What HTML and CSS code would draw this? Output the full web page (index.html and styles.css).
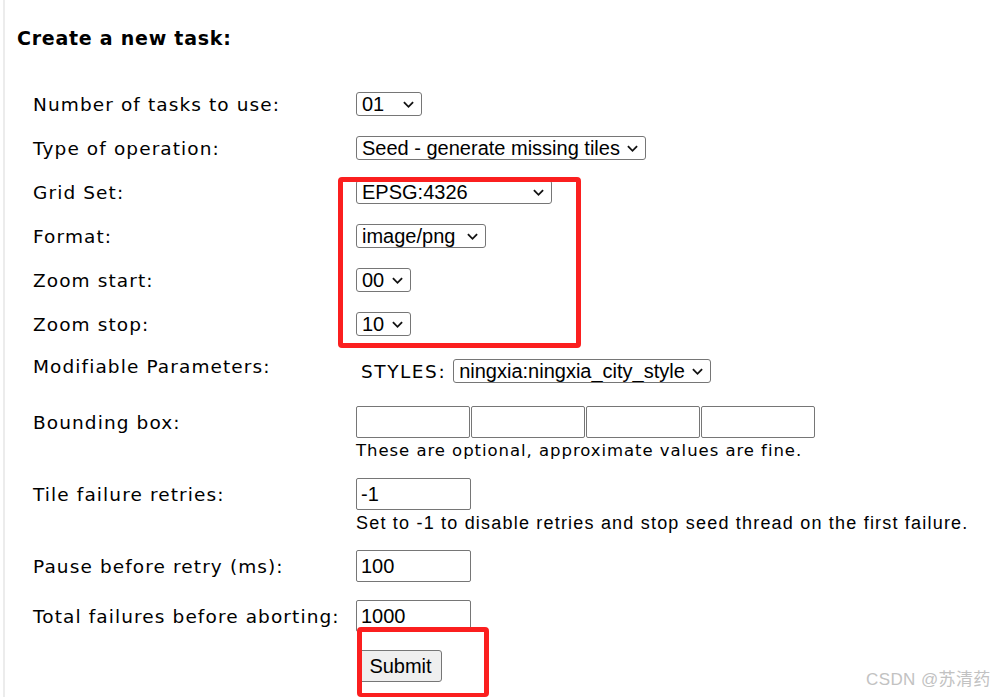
FILE: index.html
```html
<!DOCTYPE html>
<html>
<head>
<meta charset="utf-8">
<link rel="stylesheet" href="styles.css">
</head>
<body>
<div class="page">
  <div class="title">Create a new task:</div>
  <form class="form">
    <div class="row">
      <label class="label">Number of tasks to use:</label>
      <span class="sel"><select class="s-tasks"><option>01</option></select><svg class="chev" viewBox="0 0 12 7"><path d="M1 1L6 6L11 1"/></svg></span>
    </div>
    <div class="row">
      <label class="label">Type of operation:</label>
      <span class="sel"><select class="s-type"><option>Seed - generate missing tiles</option></select><svg class="chev" viewBox="0 0 12 7"><path d="M1 1L6 6L11 1"/></svg></span>
    </div>
    <div class="row">
      <label class="label">Grid Set:</label>
      <span class="sel"><select class="s-grid"><option>EPSG:4326</option></select><svg class="chev" viewBox="0 0 12 7"><path d="M1 1L6 6L11 1"/></svg></span>
    </div>
    <div class="row">
      <label class="label">Format:</label>
      <span class="sel"><select class="s-format"><option>image/png</option></select><svg class="chev" viewBox="0 0 12 7"><path d="M1 1L6 6L11 1"/></svg></span>
    </div>
    <div class="row">
      <label class="label">Zoom start:</label>
      <span class="sel"><select class="s-zoom"><option>00</option></select><svg class="chev" viewBox="0 0 12 7"><path d="M1 1L6 6L11 1"/></svg></span>
    </div>
    <div class="row">
      <label class="label">Zoom stop:</label>
      <span class="sel"><select class="s-zoom"><option>10</option></select><svg class="chev" viewBox="0 0 12 7"><path d="M1 1L6 6L11 1"/></svg></span>
    </div>
    <div class="row row-params">
      <label class="label">Modifiable Parameters:</label>
      <div class="params">
        <span class="param-name">STYLES:</span>
        <span class="sel"><select class="s-style"><option>ningxia:ningxia_city_style</option></select><svg class="chev" viewBox="0 0 12 7"><path d="M1 1L6 6L11 1"/></svg></span>
      </div>
    </div>
    <div class="row row-bbox">
      <label class="label">Bounding box:</label>
      <div class="value">
        <div class="bbox">
          <input class="box-in" type="text"><input class="box-in" type="text"><input class="box-in" type="text"><input class="box-in" type="text">
        </div>
        <div class="note-v">These are optional, approximate values are fine.</div>
      </div>
    </div>
    <div class="row row-retry">
      <label class="label">Tile failure retries:</label>
      <div class="value">
        <input class="txt" type="text" value="-1">
        <div class="note-a">Set to -1 to disable retries and stop seed thread on the first failure.</div>
      </div>
    </div>
    <div class="row row-pause">
      <label class="label">Pause before retry (ms):</label>
      <input class="txt" type="text" value="100">
    </div>
    <div class="row row-total">
      <label class="label">Total failures before aborting:</label>
      <input class="txt" type="text" value="1000">
    </div>
    <div class="row row-submit">
      <span class="label"></span>
      <button class="btn" type="button">Submit</button>
    </div>
  </form>
  <div class="mark mark-grid"></div>
  <div class="mark mark-submit"></div>
  <div class="watermark">CSDN @苏清药</div>
</div>
</body>
</html>
```
FILE: styles.css
```css
html, body {
  margin: 0;
  padding: 0;
  background: #fff;
}
body {
  font-family: "DejaVu Sans", Verdana, sans-serif;
  color: #000;
  overflow: hidden;
}
.page {
  position: relative;
  margin-left: 3px;
  border-left: 2px solid #ececec;
  height: 697px;
  box-sizing: border-box;
  padding: 28px 0 0 12px;
}
.title {
  font-weight: bold;
  font-size: 19px;
  line-height: 21px;
  letter-spacing: 0.75px;
}
.form {
  margin: 43px 0 0 16px;
}
.row {
  display: flex;
  align-items: baseline;
  margin-bottom: 20px;
}
.label {
  flex: none;
  width: 323px;
  font-size: 18.5px;
  line-height: 21px;
  letter-spacing: 1.1px;
  white-space: nowrap;
}
.sel {
  position: relative;
  display: inline-block;
}
select {
  -webkit-appearance: none;
  appearance: none;
  display: block;
  box-sizing: border-box;
  height: 24px;
  margin: 0;
  padding: 0 0 0 5px;
  border: 1px solid #767676;
  border-radius: 3px;
  background: #fff;
  color: #000;
  font-family: "Liberation Sans", Arial, sans-serif;
  font-size: 20px;
  line-height: 22px;
}
.chev {
  position: absolute;
  right: 8px;
  top: 9px;
  width: 11px;
  height: 7px;
  overflow: visible;
}
.chev path {
  fill: none;
  stroke: #111;
  stroke-width: 2;
}
.s-tasks { width: 66px; }
.s-type { width: 290px; }
.s-grid { width: 196px; }
.s-format { width: 130px; }
.s-zoom { width: 55px; }
.s-style { width: 258px; }
.row-params {
  align-items: flex-start;
  margin-top: 6px;
  margin-bottom: 23px;
}
.params {
  display: flex;
  align-items: center;
  gap: 7px;
  padding: 3px 0 0 5px;
}
.param-name {
  font-size: 18.5px;
  line-height: 21px;
  letter-spacing: 1.55px;
}
.value {
  display: flex;
  flex-direction: column;
}
.bbox {
  display: flex;
  gap: 1px;
}
input {
  box-sizing: border-box;
  height: 32px;
  margin: 0;
  padding: 0 4px;
  border: 1px solid #767676;
  border-radius: 2px;
  background: #fff;
  color: #000;
  font-family: "Liberation Sans", Arial, sans-serif;
  font-size: 20px;
  outline: none;
}
.box-in { width: 114px; }
.txt { width: 115px; }
.note-v {
  margin-top: 3px;
  font-size: 16.5px;
  line-height: 19px;
  letter-spacing: 0.95px;
  white-space: nowrap;
}
.note-a {
  margin-top: 3px;
  font-family: "Liberation Sans", Arial, sans-serif;
  font-size: 18px;
  line-height: 21px;
  letter-spacing: 1.2px;
  white-space: nowrap;
}
.row-bbox { margin-bottom: 18px; }
.row-retry { margin-bottom: 16px; }
.row-pause { margin-bottom: 18px; }
.row-total { margin-bottom: 18px; }
.btn {
  box-sizing: border-box;
  width: 83px;
  height: 32px;
  margin: 0 0 0 3px;
  padding: 0 8px;
  border: 1px solid #767676;
  border-radius: 3px;
  background: #efefef;
  color: #000;
  font-family: "Liberation Sans", Arial, sans-serif;
  font-size: 20px;
}
.mark {
  position: absolute;
  border: 5px solid #fb1f1f;
  border-radius: 4px;
  box-sizing: border-box;
  pointer-events: none;
}
.mark-grid {
  left: 333px;
  top: 177px;
  width: 243px;
  height: 171px;
}
.mark-submit {
  left: 352px;
  top: 627px;
  width: 132px;
  height: 70px;
  border-bottom-width: 4px;
}
.watermark {
  position: absolute;
  left: 861px;
  top: 670px;
  font-family: "Liberation Sans", "Noto Sans CJK SC", sans-serif;
  font-size: 17px;
  line-height: 20px;
  letter-spacing: 0.4px;
  color: #c2c2c2;
  white-space: nowrap;
}
```
